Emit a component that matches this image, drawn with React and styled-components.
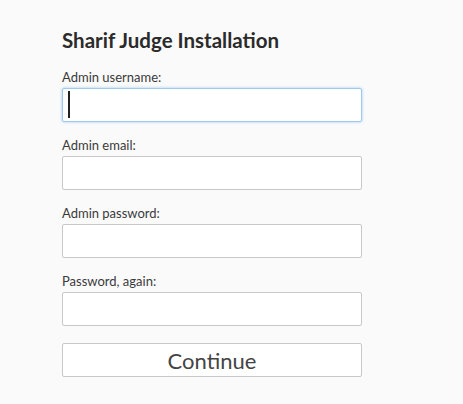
import React from "react";
import styled, { createGlobalStyle } from "styled-components";

const GlobalStyle = createGlobalStyle`
  html, body {
    margin: 0;
    padding: 0;
    background: #fafafa;
  }
  body {
    font-family: Lato, "Open Sans", "Liberation Sans", sans-serif;
    color: #333;
  }
`;

const Page = styled.div`
  min-height: 404px;
  background: #fafafa;
  padding: 28px 0 0 62px;
  box-sizing: border-box;
`;

const Form = styled.form`
  width: 300px;
  display: flex;
  flex-direction: column;
`;

const Title = styled.h1`
  margin: 0 0 17px;
  font-size: 20.5px;
  line-height: 24px;
  font-weight: 700;
  color: #2b2b2b;
`;

const Label = styled.label`
  display: block;
  font-size: 13px;
  line-height: 16px;
  color: #3a3a3a;
  margin-bottom: 3px;
`;

const Field = styled.div`
  margin-bottom: 15px;
`;

const Input = styled.input`
  display: block;
  width: 100%;
  height: 34px;
  box-sizing: border-box;
  margin: 0;
  padding: 0 6px;
  font-family: inherit;
  font-size: 16px;
  background: #fff;
  border: 1px solid ${(p) => (p.$focused ? "#9ecaed" : "#c8c8c8")};
  border-radius: 2px;
  box-shadow: ${(p) => (p.$focused ? "0 0 3px #9ecaed" : "none")};
  outline: none;
`;

const Caret = styled.span`
  position: absolute;
  left: 6px;
  top: 3px;
  width: 2px;
  height: 27px;
  background: #222;
`;

const InputWrap = styled.div`
  position: relative;
`;

const Button = styled.button`
  width: 100%;
  height: 34px;
  margin-top: 2px;
  box-sizing: border-box;
  background: #fff;
  border: 1px solid #c8c8c8;
  border-radius: 2px;
  font-family: inherit;
  font-size: 22px;
  line-height: 30px;
  color: #444;
  padding: 2px 0 0;
`;

const fields = [
  { label: "Admin username:", type: "text", focused: true },
  { label: "Admin email:", type: "text" },
  { label: "Admin password:", type: "password" },
  { label: "Password, again:", type: "password" },
];

export default function App() {
  return (
    <>
      <GlobalStyle />
      <Page>
        <Form onSubmit={(e) => e.preventDefault()}>
          <Title>Sharif Judge Installation</Title>
          {fields.map((f) => (
            <Field key={f.label}>
              <Label>{f.label}</Label>
              <InputWrap>
                <Input type={f.type} $focused={f.focused} readOnly />
                {f.focused && <Caret />}
              </InputWrap>
            </Field>
          ))}
          <Button type="button">Continue</Button>
        </Form>
      </Page>
    </>
  );
}
